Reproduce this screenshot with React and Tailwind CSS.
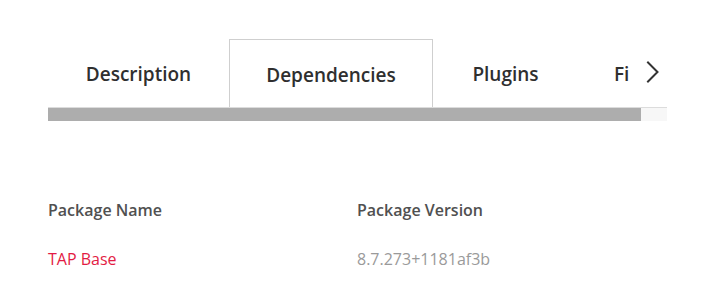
import React from "react";

export default function App() {
  const font = { fontFamily: '"Open Sans", "Noto Sans", sans-serif' };
  return (
    <div className="w-[722px] h-[306px] bg-white overflow-hidden" style={font}>
      <div className="pl-[48px] pt-[39px] w-[667px]">
        <div className="relative">
          <div className="flex h-[69px] border-b border-[#dcdcdc] overflow-hidden text-[19px] font-semibold text-[#2f2f2f]">
            <div className="w-[181px] shrink-0 flex items-center justify-center pt-[3px]">Description</div>
            <div className="w-[204px] shrink-0 flex items-center justify-center pt-[3px] border-t border-l border-r border-[#cfcfcf] -mb-px bg-white">Dependencies</div>
            <div className="w-[145px] shrink-0 flex items-center justify-center pt-[3px]">Plugins</div>
            <div className="shrink-0 flex items-center pt-[3px] pl-[36px] pr-[36px]">Files</div>
          </div>
          <div className="absolute right-0 top-0 h-[68px] w-[37px] bg-white flex items-center justify-end pr-[7px]">
            <svg width="14" height="22" viewBox="0 0 14 22" fill="none" className="-mt-[2px]">
              <path d="M2 1.5 L11.5 11 L2 20.5" stroke="#333" strokeWidth="2" strokeLinecap="square" />
            </svg>
          </div>
        </div>
        <div className="flex h-[13px]">
          <div className="flex-1 bg-[#adadad]" />
          <div className="w-[26px] bg-[#f7f7f7]" />
        </div>
      </div>
      <div className="pl-[48px] mt-[78px] grid grid-cols-[309px_1fr] text-[16px]">
        <div className="font-semibold text-[#505050] leading-[22px]">Package Name</div>
        <div className="font-semibold text-[#505050] leading-[22px]">Package Version</div>
        <div className="text-[#e31b44] leading-[22px] mt-[27px]">TAP Base</div>
        <div className="text-[#9a9a9a] leading-[22px] mt-[27px]">8.7.273+1181af3b</div>
      </div>
    </div>
  );
}
